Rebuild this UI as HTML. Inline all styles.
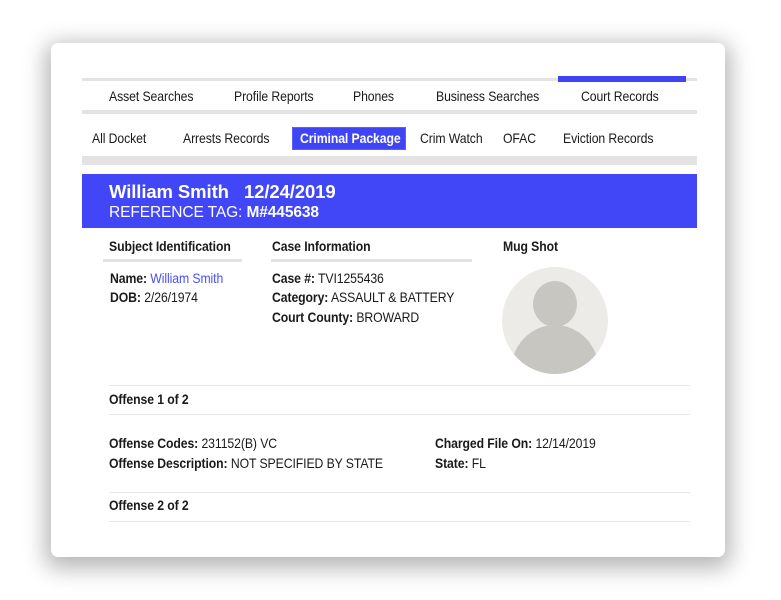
<!DOCTYPE html>
<html><head><meta charset="utf-8"><style>
*{margin:0;padding:0;box-sizing:border-box}
body{width:781px;height:600px;background:#fff;position:relative;overflow:hidden;font-family:"Liberation Sans",Arial,sans-serif;color:#1a1a1a}
.card{position:absolute;left:51px;top:43px;width:674px;height:514px;background:#fff;border-radius:7px;box-shadow:0 6px 22px 6px rgba(0,0,0,.28)}
.a{position:absolute;white-space:nowrap;font-size:13.6px;letter-spacing:-.1px;line-height:16px;transform:scaleX(.9);transform-origin:0 0}
.t{transform:none}
.b{font-weight:bold}
.ln{position:absolute;background:#e4e2e3}
.hl{position:absolute;height:1px;background:#e8e8e8;left:109px;width:581px}
</style></head><body>
<div class="card"></div>
<div class="ln" style="left:82px;top:78px;width:615px;height:3px"></div>
<div style="position:absolute;left:558px;top:76px;width:128px;height:6px;background:#3f45f5"></div>
<div class="a" style="left:109px;top:89px">Asset Searches</div>
<div class="a" style="left:234px;top:89px">Profile Reports</div>
<div class="a" style="left:353px;top:89px">Phones</div>
<div class="a" style="left:436px;top:89px">Business Searches</div>
<div class="a" style="left:581px;top:89px">Court Records</div>
<div class="ln" style="left:82px;top:110px;width:615px;height:4px"></div>
<div class="a" style="left:92px;top:131px">All Docket</div>
<div class="a" style="left:183px;top:131px">Arrests Records</div>
<div style="position:absolute;left:292px;top:127px;width:114px;height:23px;background:#3f45f5;border:1px solid #5a60ff"></div>
<div class="a b" style="left:300px;top:131px;color:#fff">Criminal Package</div>
<div class="a" style="left:420px;top:131px">Crim Watch</div>
<div class="a" style="left:503px;top:131px">OFAC</div>
<div class="a" style="left:563px;top:131px">Eviction Records</div>
<div class="ln" style="left:82px;top:156px;width:615px;height:9px"></div>
<div style="position:absolute;left:82px;top:174px;width:615px;height:54px;background:#4147f6"></div>
<div class="a b t" style="left:109px;top:181px;color:#fff;font-size:18.5px;line-height:22px">William Smith&nbsp;&nbsp; 12/24/2019</div>
<div class="a t" style="left:109px;top:204px;color:#fff;font-size:15.5px;line-height:18px">REFERENCE TAG: <b>M#445638</b></div>
<div class="a b" style="left:109px;top:239px">Subject Identification</div>
<div class="a b" style="left:272px;top:239px">Case Information</div>
<div class="a b" style="left:503px;top:239px">Mug Shot</div>
<div class="ln" style="left:103px;top:259px;width:139px;height:3px"></div>
<div class="ln" style="left:271px;top:259px;width:201px;height:3px"></div>
<div class="a" style="left:110px;top:271px"><b>Name:</b> <span style="color:#4a50f5">William Smith</span></div>
<div class="a" style="left:110px;top:290px"><b>DOB:</b> 2/26/1974</div>
<div class="a" style="left:272px;top:271px"><b>Case #:</b> TVI1255436</div>
<div class="a" style="left:272px;top:290px"><b>Category:</b> ASSAULT &amp; BATTERY</div>
<div class="a" style="left:272px;top:310px"><b>Court County:</b> BROWARD</div>
<svg style="position:absolute;left:502px;top:267px" width="106" height="107" viewBox="0 0 106 107">
<defs><clipPath id="c"><ellipse cx="53" cy="53.5" rx="53" ry="53.5"/></clipPath></defs>
<ellipse cx="53" cy="53.5" rx="53" ry="53.5" fill="#edebe7"/>
<g clip-path="url(#c)" fill="#c8c6c1">
<ellipse cx="53" cy="37" rx="22" ry="23"/>
<ellipse cx="53" cy="104" rx="44" ry="46"/>
</g></svg>
<div class="hl" style="top:385px"></div>
<div class="a b" style="left:109px;top:392px">Offense 1 of 2</div>
<div class="hl" style="top:414px"></div>
<div class="a" style="left:109px;top:436px"><b>Offense Codes:</b> 231152(B) VC</div>
<div class="a" style="left:109px;top:456px"><b>Offense Description:</b> NOT SPECIFIED BY STATE</div>
<div class="a" style="left:435px;top:436px"><b>Charged File On:</b> 12/14/2019</div>
<div class="a" style="left:435px;top:456px"><b>State:</b> FL</div>
<div class="hl" style="top:492px"></div>
<div class="a b" style="left:109px;top:498px">Offense 2 of 2</div>
<div class="hl" style="top:521px"></div>
</body></html>
